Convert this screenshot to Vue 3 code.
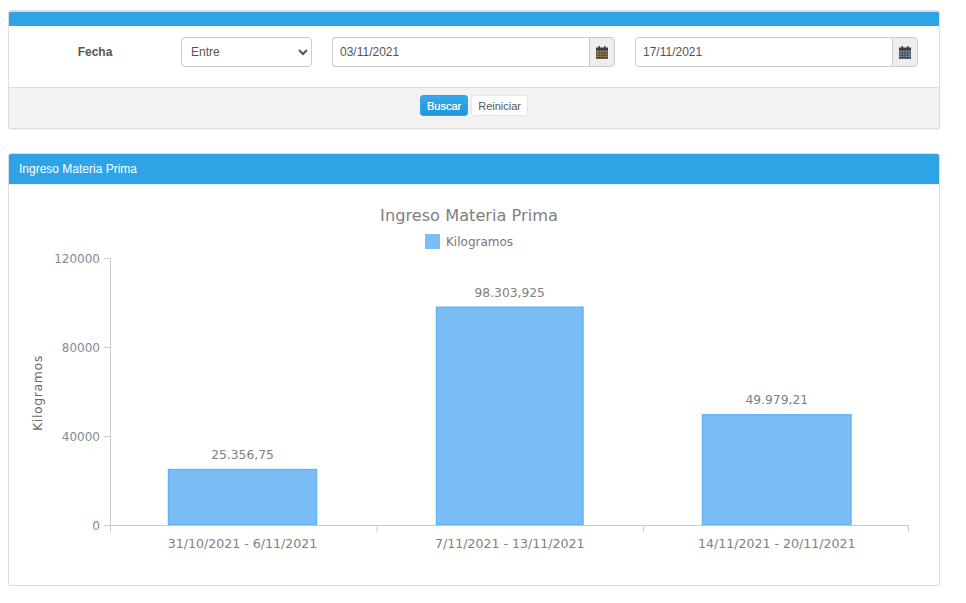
<template>
	<div class="page">
		<section class="panel filter">
			<div class="bar"></div>
			<div class="fields">
				<label class="field-label">Fecha</label>
				<select class="control">
					<option>Entre</option>
					<option>Igual</option>
				</select>
				<div v-for="date in dates" :key="date.value" class="date-group">
					<input class="control date-input" type="text" :value="date.value" />
					<span class="addon">
						<svg width="12" height="13" viewBox="0 0 12 13">
							<rect x="0" y="1.500" width="12" height="11.500" fill="#3d3d3d" />
							<rect x="2.500" y="0" width="1.500" height="3" fill="#3d3d3d" />
							<rect x="8" y="0" width="1.500" height="3" fill="#3d3d3d" />
							<rect x="0.500" y="4.500" width="11" height="8" :class="date.tone" />
							<path d="M0.500 6.800h11M0.500 9.200h11M0.500 11.500h11M3.300 4.500v8M6 4.500v8M8.700 4.500v8" stroke="#3d3d3d" stroke-width="0.800" />
						</svg>
					</span>
				</div>
			</div>
			<div class="actions">
				<button class="btn primary">Buscar</button>
				<button class="btn">Reiniciar</button>
			</div>
		</section>

		<section class="panel report">
			<header class="bar title">Ingreso Materia Prima</header>
			<svg class="chart" width="930" height="400" viewBox="9 185 930 400">
				<text class="chart-title" x="469" y="221" text-anchor="middle">Ingreso Materia Prima</text>
				<rect x="425" y="234" width="15" height="15" fill="#7abdf7" />
				<text class="legend" x="446" y="246">Kilogramos</text>

				<g v-for="tick in yTicks" :key="tick.label">
					<line class="axis" x1="104" x2="110" :y1="tick.y" :y2="tick.y" />
					<text class="y-label" x="100" :y="tick.y + 4.5" text-anchor="end">{{ tick.label }}</text>
				</g>
				<line class="axis" x1="110.500" x2="110.500" y1="258" y2="532" />
				<line class="axis" x1="110" x2="909" y1="525.500" y2="525.500" />
				<line v-for="x in xTicks" :key="x" class="axis" :x1="x" :x2="x" y1="525" y2="532" />

				<text class="axis-title" transform="translate(42 393) rotate(-90)" text-anchor="middle">Kilogramos</text>

				<g v-for="b in bars" :key="b.range">
					<rect class="column" :x="b.x" :y="barTop(b.value)" :width="b.width" :height="524.500 - barTop(b.value)" />
					<text class="value" :x="b.x + b.width / 2" :y="barTop(b.value) - 10.500" text-anchor="middle">{{ b.text }}</text>
					<text class="range" :x="b.x + b.width / 2" y="548" text-anchor="middle">{{ b.range }}</text>
				</g>
			</svg>
		</section>
	</div>
</template>

<script setup>
const dates = [
	{ value: '03/11/2021', tone: 'warm' },
	{ value: '17/11/2021', tone: 'cool' }
]

const yTicks = [
	{ label: '120000', y: 258.5 },
	{ label: '80000', y: 347.5 },
	{ label: '40000', y: 436.5 },
	{ label: '0', y: 525.5 }
]
const xTicks = [110.5, 377, 643.5, 908.5]

const bars = [
	{ x: 168.5, width: 148, value: 25356.75, text: '25.356,75', range: '31/10/2021 - 6/11/2021' },
	{ x: 436.5, width: 146.5, value: 98303.925, text: '98.303,925', range: '7/11/2021 - 13/11/2021' },
	{ x: 702.5, width: 148.5, value: 49979.21, text: '49.979,21', range: '14/11/2021 - 20/11/2021' }
]

const barTop = (value) => 526 - (value / 120000) * 267
</script>

<style>
body {
	background: #fff;
}
</style>

<style scoped>
.page {
	width: 932px;
	margin-left: 8px;
	padding-top: 10px;
	font-family: "Liberation Sans", Arial, sans-serif;
	font-size: 12px;
	color: #555;
}

.panel {
	border: 1px solid #ddd;
	border-radius: 3px;
	background: #fff;
	box-shadow: 0 1px 1px rgba(0, 0, 0, 0.05);
	overflow: hidden;
}

.filter {
	border-top-width: 2px;
}

.bar {
	background: #2ea3e6;
	height: 14px;
}

.fields {
	display: grid;
	grid-template-columns: 152px 131px 283px 283px;
	column-gap: 20px;
	align-items: center;
	padding: 11px 21px 20px 0;
}

.field-label {
	padding-left: 20px;
	text-align: center;
	font-weight: bold;
	color: #555;
}

.control {
	box-sizing: border-box;
	height: 30px;
	border: 1px solid #ccc;
	border-radius: 4px;
	background: #fff;
	font-family: inherit;
	font-size: 12px;
	color: #555;
	outline: none;
}

select.control {
	width: 131px;
	padding: 0 5px;
}

.date-group {
	display: flex;
}

.date-input {
	flex: 1;
	min-width: 0;
	padding: 0 7px;
	border-right: 0;
	border-radius: 4px 0 0 4px;
}

.addon {
	box-sizing: border-box;
	display: flex;
	align-items: center;
	justify-content: center;
	width: 26px;
	height: 30px;
	border: 1px solid #ccc;
	border-radius: 0 4px 4px 0;
	background: #eee;
}

.warm {
	fill: #a58a55;
}

.cool {
	fill: #7d96b0;
}

.actions {
	display: flex;
	justify-content: center;
	gap: 3px;
	height: 41px;
	box-sizing: border-box;
	padding-top: 7px;
	background: #f3f3f3;
	border-top: 1px solid #ddd;
}

.btn {
	height: 21px;
	padding: 0 6px;
	border: 1px solid #e6e6e6;
	border-radius: 3px;
	background: #fff;
	font-family: inherit;
	font-size: 11px;
	color: #555;
}

.btn.primary {
	border-color: #2ea3e6;
	background: linear-gradient(#36a9ea, #1f95dc);
	color: #fff;
	text-shadow: 0 0 0.4px currentColor;
}

.report {
	margin-top: 24px;
	height: 431px;
}

.title {
	box-sizing: border-box;
	height: 31px;
	padding-left: 10px;
	line-height: 30px;
	font-size: 12px;
	color: #fff;
	border-bottom: 1px solid #e8eef2;
}

.chart {
	display: block;
	font-family: "DejaVu Sans", Verdana, sans-serif;
}

.chart-title {
	font-size: 16.2px;
	fill: #808080;
}

.legend {
	font-size: 12px;
	fill: #777;
}

.axis {
	stroke: #ccc;
	stroke-width: 1;
}

.y-label {
	font-size: 12px;
	fill: #7f8a99;
}

.axis-title {
	font-size: 12.5px;
	letter-spacing: 0.6px;
	fill: #666;
}

.column {
	fill: #7abdf7;
	stroke: #64b5f6;
	stroke-width: 1.500;
}

.value {
	font-size: 12.3px;
	fill: #808080;
}

.range {
	font-size: 12.6px;
	fill: #808080;
}
</style>
